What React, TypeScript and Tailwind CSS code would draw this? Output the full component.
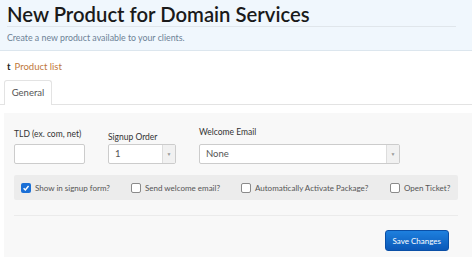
import React from 'react';

const Checkbox: React.FC<{ checked?: boolean; label: string; className?: string }> = ({ checked, label, className }) => (
  <label className={`flex items-center gap-[4px] text-[8px] text-[#555] whitespace-nowrap ${className ?? ''}`}>
    {checked ? (
      <span className="w-[10px] h-[10px] rounded-[2px] bg-[#1a6fd6] flex items-center justify-center">
        <svg width="8" height="8" viewBox="0 0 10 10">
          <path d="M2 5.2 L4.2 7.4 L8.2 2.6" stroke="#fff" strokeWidth="1.8" fill="none" />
        </svg>
      </span>
    ) : (
      <span className="w-[10px] h-[10px] rounded-[2px] border border-[#8a8a8a] bg-white" />
    )}
    {label}
  </label>
);

const Caret = () => (
  <span className="w-[13px] h-full border-l border-[#ddd] bg-[#f1f1f1] flex items-center justify-center text-[5px] text-[#999]">
    ▼
  </span>
);

export default function App() {
  return (
    <div className="w-[474px] h-[260px] bg-white font-['Lato','Open_Sans',sans-serif] overflow-hidden">
      <div className="bg-[#f0f7fd] border-b border-[#dce6ee] h-[51px] pl-[7px] pt-[3px] mr-[2px]">
        <h1 className="text-[20.3px] font-semibold text-[#1a1a1a] leading-[22px] border-b border-[#e0e6eb] mr-[16px] pb-[1px] whitespace-nowrap">
          New Product for Domain Services
        </h1>
        <p className="text-[8.8px] text-[#6c8196] mt-[4px] whitespace-nowrap">Create a new product available to your clients.</p>
      </div>

      <div className="pl-[7px] mt-[9px] text-[9.5px] flex items-center gap-[4px] whitespace-nowrap">
        <span className="text-[#222] font-bold">t</span>
        <span className="text-[#c0783a]">Product list</span>
      </div>

      <div className="mt-[6px] flex border-b border-[#e3e3e3] mr-[2px]">
        <div className="ml-[4px] w-[48px] h-[25px] border border-b-0 border-[#e3e3e3] rounded-t-[3px] bg-white flex items-center justify-center text-[9.5px] text-[#555] -mb-px">
          General
        </div>
      </div>

      <div className="mt-[8px] mx-[4px] mr-[2px] h-[144px] bg-[#f8f8f8] px-[10px] pt-[14px]">
        <div className="flex items-end">
          <div className="w-[71px]">
            <div className="text-[8.5px] leading-[10px] text-[#333] mb-[5px] whitespace-nowrap">TLD (ex. com, net)</div>
            <div className="h-[20px] border border-[#ccc] rounded-[2px] bg-white" />
          </div>
          <div className="ml-[23px] w-[68px]">
            <div className="text-[8.5px] leading-[10px] text-[#333] mb-[2px] whitespace-nowrap">Signup Order</div>
            <div className="h-[20px] border border-[#ccc] rounded-[2px] bg-white flex items-center justify-between overflow-hidden">
              <span className="pl-[6px] text-[9.5px] text-[#555]">1</span>
              <Caret />
            </div>
          </div>
          <div className="ml-[23px] w-[201px]">
            <div className="text-[8.5px] leading-[10px] text-[#333] mb-[7px] whitespace-nowrap">Welcome Email</div>
            <div className="h-[20px] border border-[#ccc] rounded-[2px] bg-white flex items-center justify-between overflow-hidden">
              <span className="pl-[6px] text-[9.5px] text-[#555]">None</span>
              <Caret />
            </div>
          </div>
        </div>

        <div className="mt-[11px] h-[25px] bg-[#ececec] rounded-[2px] flex items-center pl-[7px] mr-[4px]">
          <Checkbox className="w-[110px]" checked label="Show in signup form?" />
          <Checkbox className="w-[110px]" label="Send welcome email?" />
          <Checkbox className="w-[149px]" label="Automatically Activate Package?" />
          <Checkbox label="Open Ticket?" />
        </div>

        <div className="mt-[15px] border-t border-[#ebebeb] mr-[4px]" />

        <div className="flex justify-end mt-[14px] mr-[13px]">
          <button className="h-[21px] px-[7px] rounded-[3px] bg-gradient-to-b from-[#1e80de] to-[#0b58b8] text-white text-[8px] border border-[#0a4fa6] whitespace-nowrap">
            Save Changes
          </button>
        </div>
      </div>
    </div>
  );
}
